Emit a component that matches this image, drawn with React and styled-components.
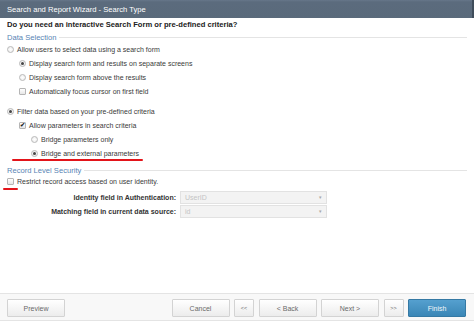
import React from "react";
import styled, { createGlobalStyle } from "styled-components";

const GlobalStyle = createGlobalStyle`
  html, body {
    margin: 0;
    padding: 0;
    background: #fff;
  }
  body {
    font-family: "Liberation Sans", Arial, sans-serif;
    color: #333;
  }
`;

const Wizard = styled.div`
  width: 474px;
  height: 324px;
  display: flex;
  flex-direction: column;
  background: #fff;
  overflow: hidden;
`;

const TitleBar = styled.div`
  height: 18px;
  flex: none;
  display: flex;
  align-items: center;
  padding-left: 7px;
  background: linear-gradient(#66768a 0, #5b6b7d 2px, #5a6a7b 100%);
  border-right: 2px solid #3f4d5b;
  color: #fff;
  font-size: 7.6px;
`;

const Body = styled.div`
  flex: 1;
  padding: 0 7px;
`;

const Question = styled.div`
  height: 14px;
  line-height: 14px;
  font-size: 7.6px;
  font-weight: bold;
  color: #222;
`;

const Legend = styled.div`
  height: 10px;
  display: flex;
  align-items: center;
  gap: 3px;
  margin-top: ${(p) => p.$top || 0}px;
  font-size: 7.6px;
  color: #5884b4;

  &::after {
    content: "";
    flex: 1;
    height: 1px;
    background: #e4e4e4;
  }
`;

const Row = styled.div`
  position: relative;
  height: ${(p) => p.$h || 14}px;
  display: flex;
  align-items: center;
  gap: 3px;
  margin-top: ${(p) => p.$top || 0}px;
  padding-left: ${(p) => p.$indent * 12}px;
  font-size: 7px;
  color: #3a3a3a;
`;

const Mark = styled.span`
  position: absolute;
  height: 2px;
  background-color: #e3141a;
  border-radius: 1px;
  left: ${(p) => p.$left}px;
  width: ${(p) => p.$width}px;
  top: ${(p) => p.$top}px;
`;

const Radio = styled.span`
  flex: none;
  box-sizing: border-box;
  width: 7px;
  height: 7px;
  border-radius: 50%;
  border: 1px solid #b9b9b9;
  background: radial-gradient(circle, #fff 0, #e9e9e9 100%);
  display: flex;
  align-items: center;
  justify-content: center;

  &::after {
    content: "";
    display: ${(p) => (p.$on ? "block" : "none")};
    width: 3px;
    height: 3px;
    border-radius: 50%;
    background: #444;
  }
`;

const Check = styled.span`
  flex: none;
  box-sizing: border-box;
  width: 7px;
  height: 7px;
  border-radius: 1px;
  border: 1px solid #b5b5b5;
  background: linear-gradient(#fff, #e6e6e6);
  display: flex;
  align-items: center;
  justify-content: center;
  color: #222;
  font-size: 6px;
  line-height: 1;
  font-weight: bold;
`;

const FieldRow = styled.div`
  height: 14px;
  display: flex;
  align-items: center;
  gap: 4px;
  margin-top: ${(p) => p.$top || 0}px;
`;

const FieldLabel = styled.div`
  width: 169px;
  text-align: right;
  font-size: 7px;
  font-weight: bold;
  color: #333;
`;

const Select = styled.div`
  box-sizing: border-box;
  width: 147px;
  height: 13px;
  display: flex;
  align-items: center;
  justify-content: space-between;
  padding: 0 4px;
  border: 1px solid #e2e2e2;
  background: #f3f3f3;
  color: #c4c4c4;
  font-size: 7px;

  &::after {
    content: "▾";
    font-size: 5px;
    color: #a8a8a8;
  }
`;

const Footer = styled.div`
  flex: none;
  display: flex;
  gap: 4.5px;
  padding: 5px 8px 3px 7px;
  margin-bottom: 3px;
  background: #f8f8f8;
  border-top: 1px solid #e4e4e4;
  border-bottom: 1px solid #e4e4e4;
`;

const Button = styled.div`
  box-sizing: border-box;
  width: ${(p) => (p.$narrow ? 20 : 58)}px;
  height: 18px;
  display: flex;
  align-items: center;
  justify-content: center;
  margin-right: ${(p) => (p.$push ? "auto" : 0)};
  border: 1px solid ${(p) => (p.$primary ? "#3579a4" : "#d3d3d3")};
  border-radius: 1px;
  background: ${(p) =>
    p.$primary
      ? "linear-gradient(#55a0cf, #3a86b6)"
      : "linear-gradient(#ffffff, #ececec)"};
  color: ${(p) => (p.$primary ? "#f2f7fb" : "#6a6a6a")};
  font-size: ${(p) => (p.$narrow ? 5.5 : 7)}px;
`;

const Option = ({ type, on, indent, top, h, children, mark }) => (
  <Row $indent={indent} $top={top} $h={h}>
    {type === "radio" ? <Radio $on={on} /> : <Check>{on ? "✔" : ""}</Check>}
    <span>{children}</span>
    {mark && <Mark $left={mark[0]} $width={mark[1]} $top={mark[2]} />}
  </Row>
);

export default function App() {
  return (
    <>
      <GlobalStyle />
      <Wizard>
        <TitleBar>Search and Report Wizard - Search Type</TitleBar>
        <Body>
          <Question>Do you need an interactive Search Form or pre-defined criteria?</Question>
          <Legend>Data Selection</Legend>
          <Option type="radio" indent={0}>Allow users to select data using a search form</Option>
          <Option type="radio" on indent={1}>Display search form and results on separate screens</Option>
          <Option type="radio" indent={1}>Display search form above the results</Option>
          <Option type="check" indent={1}>Automatically focus cursor on first field</Option>
          <Option type="radio" on indent={0} top={6}>Filter data based on your pre-defined criteria</Option>
          <Option type="check" on indent={1}>Allow parameters in search criteria</Option>
          <Option type="radio" indent={2}>Bridge parameters only</Option>
          <Option type="radio" on indent={2} mark={[5, 131, 13]}>Bridge and external parameters</Option>
          <Legend $top={5}>Record Level Security</Legend>
          <Option type="check" indent={0} h={12} mark={[-4, 15, 13]}>Restrict record access based on user identity.</Option>
          <FieldRow $top={3}>
            <FieldLabel>Identity field in Authentication:</FieldLabel>
            <Select>UserID</Select>
          </FieldRow>
          <FieldRow>
            <FieldLabel>Matching field in current data source:</FieldLabel>
            <Select>id</Select>
          </FieldRow>
        </Body>
        <Footer>
          <Button $push>Preview</Button>
          <Button>Cancel</Button>
          <Button $narrow>&lt;&lt;</Button>
          <Button>&lt; Back</Button>
          <Button>Next &gt;</Button>
          <Button $narrow>&gt;&gt;</Button>
          <Button $primary>Finish</Button>
        </Footer>
      </Wizard>
    </>
  );
}
